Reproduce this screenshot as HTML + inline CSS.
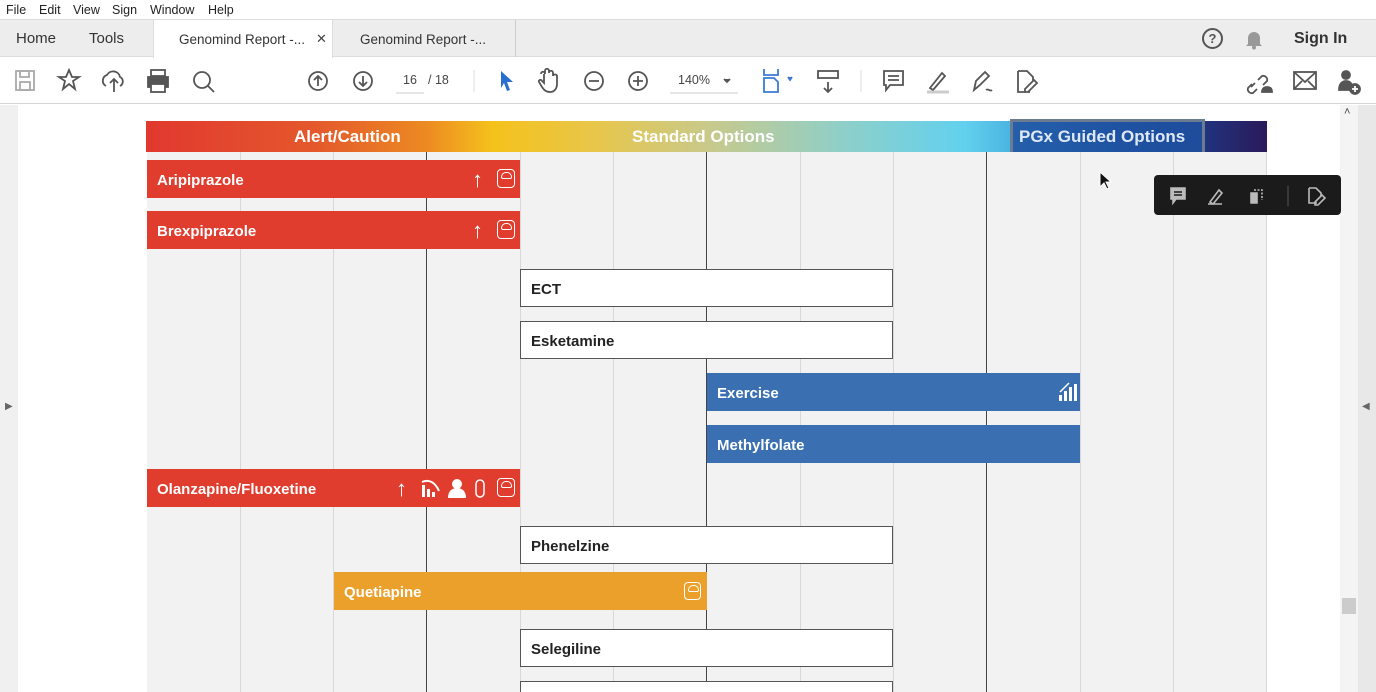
<!DOCTYPE html>
<html><head><meta charset="utf-8"><style>
*{margin:0;padding:0;box-sizing:border-box}
html,body{width:1376px;height:692px;overflow:hidden}
body{background:#fff;font-family:"Liberation Sans",sans-serif;position:relative}
.a{position:absolute}
.menu{top:0;left:0;width:1376px;height:20px;background:#fff;font-size:12.5px;color:#222;border-bottom:1px solid #ddd}
.menu span{position:absolute;top:3px}
.tabs{top:20px;left:0;width:1376px;height:37px;background:#ededed;border-bottom:1px solid #ddd}
.tb{top:58px;left:0;width:1376px;height:46px;background:#fff;border-bottom:1px solid #d6d6d6}
.grid{top:152px;left:147px;width:1120px;height:540px;background:#f2f2f2;overflow:hidden}
.vl{position:absolute;top:0;width:1px;height:540px;background:#d8d8d8}
.vl.d{background:#444}
.bar{position:absolute;height:38px;color:#fff;font-weight:bold;font-size:15px;line-height:41px;padding-left:10px}
.r{background:#e03d2f}
.w{background:#fff;border:1px solid #555;color:#222;line-height:39px}
.b{background:#3a6fb2}
.o{background:#eaa02a}
.bi{position:absolute;top:9px;width:18px;height:19px;border:1.5px solid #fff;border-radius:4px}
.bi::after{content:"";position:absolute;left:3px;top:2px;width:9px;height:5px;border:1.3px solid #fff;border-radius:5px 5px 2px 2px}
</style></head><body>
<div class="a menu"><span style="left:6px">File</span><span style="left:39px">Edit</span><span style="left:73px">View</span><span style="left:112px">Sign</span><span style="left:150px">Window</span><span style="left:208px">Help</span></div>
<div class="a tabs">
<span class="a" style="left:16px;top:10px;font-size:15px;color:#333">Home</span>
<span class="a" style="left:89px;top:10px;font-size:15px;color:#333">Tools</span>
<div class="a" style="left:153px;top:0;width:180px;height:38px;background:#fff;border-left:1px solid #ddd;border-right:1px solid #ddd"><span class="a" style="left:25px;top:12px;font-size:13.5px;color:#333">Genomind Report -...</span><span class="a" style="left:162px;top:11px;font-size:13px;color:#444">✕</span></div>
<span class="a" style="left:360px;top:12px;font-size:13.5px;color:#333">Genomind Report -...</span>
<div class="a" style="left:515px;top:0;width:1px;height:37px;background:#ccc"></div>
<div class="a" style="left:1202px;top:8px;width:21px;height:21px;border:2px solid #555;border-radius:50%;font-size:13px;text-align:center;line-height:17px;color:#555;font-weight:bold">?</div>
<svg class="a" style="left:1244px;top:8px" width="20" height="22"><path d="M4 16V10a6 6 0 0 1 12 0v6l2 2H2z" fill="#999"/><circle cx="10" cy="19.5" r="2" fill="#999"/></svg>
<span class="a" style="left:1294px;top:10px;font-size:16px;color:#333;font-weight:bold">Sign In</span>
</div>
<div class="a tb">
<svg class="a" style="left:0;top:0" width="1376" height="46" fill="none" stroke="#555" stroke-width="1.8">
<rect x="16" y="13" width="18" height="19" stroke="#aaa"/><rect x="20" y="13" width="9" height="6" stroke="#aaa"/><rect x="20" y="24" width="10" height="8" stroke="#aaa"/>
<path d="M69 12l3 7h7l-6 4 2 8-6-5-6 5 2-8-6-4h7z"/>
<path d="M106 28a6 6 0 0 1 1-11 7 7 0 0 1 13 2 5 5 0 0 1 0 9M114 34V21m-4 4 4-4 4 4"/>
<rect x="148" y="19" width="20" height="10" fill="#555"/><rect x="151" y="12" width="14" height="6"/><rect x="151" y="26" width="14" height="8" fill="#fff"/>
<circle cx="202" cy="22" r="8"/><path d="M208 28l6 6"/>
<circle cx="318" cy="23" r="9"/><path d="M318 28V18m-4 4 4-4 4 4"/>
<circle cx="363" cy="23" r="9"/><path d="M363 18v10m-4-4 4 4 4-4"/>
<path d="M396 35h28" stroke="#ccc" stroke-width="1"/>
<path d="M474 12v22" stroke="#ddd" stroke-width="1"/>
<path d="M541 16c0-3 4-3 4 0v-3c0-3 4-3 4 0v2c0-3 4-3 4 0v3c0-2 4-2 4 0v8c0 5-3 8-7 8s-6-2-8-5l-3-5c-1-2 2-3 3-1l2 2V16"/>
<circle cx="594" cy="23" r="9"/><path d="M589 23h10"/>
<circle cx="638" cy="23" r="9"/><path d="M633 23h10M638 18v10"/>
<path d="M670 35h68" stroke="#ccc" stroke-width="1"/>
<path d="M724 21l3 3 3-3" fill="#555"/>
<path d="M764 11v6h14v-6M764 20h10l4 4v10h-14z" stroke="#3a7bd5"/><path d="M788 19l2 3 2-3" fill="#3a7bd5" stroke="#3a7bd5"/>
<rect x="818" y="13" width="20" height="7"/><path d="M828 24v10m-4-4 4 4 4-4"/>
<path d="M861 12v22" stroke="#ddd" stroke-width="1"/>
<path d="M884 13h19v14h-13l-4 5v-5h-2z"/><path d="M888 18h11M888 22h11"/>
<path d="M930 30l12-15 3 3-12 14z"/><path d="M927 34h22" stroke="#ccc" stroke-width="3"/>
<path d="M974 32l2-9 9-9 4 4-9 9zM986 32c2-2 4 2 6 0"/>
<path d="M1018 13h9l6 6v4M1018 13v21h12M1025 31l9-9 3 3-9 9h-3z"/>
<path d="M1251 29l4-4m3-3 4-4a4 4 0 0 1 5 5l-4 4M1257 31l-4 4a4 4 0 0 1-5-5l4-4"/><path d="M1262 34h10c0-4-2-5-5-5s-5 2-5 5z" fill="#555"/>
<rect x="1294" y="14" width="22" height="17"/><path d="M1294 14l11 10 11-10M1294 31l8-8m14 8-8-8"/>
<circle cx="1346" cy="17" r="4" fill="#555"/><path d="M1339 32c0-6 3-9 7-9s5 2 6 4v5z" fill="#555"/><circle cx="1355" cy="31" r="5" fill="#555"/><path d="M1355 28v6m-3-3h6" stroke="#fff"/>
</svg>
<svg class="a" style="left:499px;top:12px" width="16" height="22"><path d="M2 1l12 11h-6l3 8-3 1-3-8-3 5z" fill="#2a6fd0"/></svg>
<span class="a" style="left:403px;top:15px;font-size:12.5px;color:#444">16</span>
<span class="a" style="left:428px;top:15px;font-size:12.5px;color:#444">/ 18</span>
<span class="a" style="left:678px;top:15px;font-size:12.5px;color:#444">140%</span>
</div>
<div class="a" style="left:0;top:105px;width:18px;height:587px;background:#f0f0f0"></div>
<span class="a" style="left:5px;top:401px;font-size:10px;color:#666">▶</span>
<div class="a" style="left:1340px;top:105px;width:18px;height:587px;background:#f4f4f4"></div>
<span class="a" style="left:1344px;top:106px;font-size:11px;color:#444">˄</span>
<div class="a" style="left:1342px;top:598px;width:14px;height:16px;background:#ccc"></div>
<div class="a" style="left:1358px;top:105px;width:18px;height:587px;background:#e8e8e8"></div>
<span class="a" style="left:1362px;top:401px;font-size:10px;color:#666">◀</span>
<div class="a" style="left:146px;top:121px;width:1121px;height:31px;background:linear-gradient(90deg,#e2382f 0%,#e4582c 15%,#ec8a22 25%,#f5c21c 31%,#e8c64a 40%,#c9c98a 50%,#8fcfc8 62%,#62d1ee 73%,#3aa0d8 80%,#1e5ba8 88%,#22307a 95%,#2a1a5a 100%)"></div>
<span class="a" style="left:294px;top:127px;font-size:17px;color:#fff;font-weight:bold">Alert/Caution</span>
<span class="a" style="left:632px;top:127px;font-size:17px;color:#fff;font-weight:bold">Standard Options</span>
<div class="a" style="left:1010px;top:119px;width:195px;height:37px;border:3px solid #6b7b92;background:rgba(30,80,160,.85)"></div>
<span class="a" style="left:1019px;top:127px;font-size:17px;color:#dfe8f5;font-weight:bold">PGx Guided Options</span>
<div class="a grid">
<div class="vl" style="left:93px"></div><div class="vl" style="left:186px"></div><div class="vl d" style="left:279px"></div><div class="vl" style="left:373px"></div><div class="vl" style="left:466px"></div><div class="vl d" style="left:559px"></div><div class="vl" style="left:653px"></div><div class="vl" style="left:746px"></div><div class="vl d" style="left:839px"></div><div class="vl" style="left:933px"></div><div class="vl" style="left:1026px"></div><div class="vl" style="left:1119px"></div>
<div class="bar r" style="left:0;top:8px;width:373px">Aripiprazole<span class="a" style="left:325px;top:-1px;font-size:22px;font-weight:normal">↑</span><span class="bi" style="left:350px"></span></div>
<div class="bar r" style="left:0;top:59px;width:373px">Brexpiprazole<span class="a" style="left:325px;top:-1px;font-size:22px;font-weight:normal">↑</span><span class="bi" style="left:350px"></span></div>
<div class="bar w" style="left:373px;top:117px;width:373px">ECT</div>
<div class="bar w" style="left:373px;top:169px;width:373px">Esketamine</div>
<div class="bar b" style="left:560px;top:221px;width:373px">Exercise<svg class="a" style="left:350px;top:8px" width="20" height="22" fill="#fff"><rect x="2" y="14" width="3" height="6"/><rect x="7" y="10" width="3" height="10"/><rect x="12" y="6" width="3" height="14"/><rect x="17" y="3" width="3" height="17"/><path d="M3 11l9-9" stroke="#fff" stroke-width="1.5"/></svg></div>
<div class="bar b" style="left:560px;top:273px;width:373px">Methylfolate</div>
<div class="bar r" style="left:0;top:317px;width:373px">Olanzapine/Fluoxetine<span class="a" style="left:249px;top:-1px;font-size:22px;font-weight:normal">↑</span>
<svg class="a" style="left:274px;top:8px" width="70" height="22" fill="#fff"><rect x="1" y="8" width="3" height="12"/><rect x="6" y="12" width="3" height="8"/><rect x="11" y="15" width="3" height="5"/><path d="M1 5c7-3 13 0 17 9" stroke="#fff" stroke-width="2" fill="none"/><circle cx="36" cy="7" r="5"/><path d="M27 21c0-7 4-10 9-10s9 3 9 10z"/><rect x="55" y="3" width="8" height="17" rx="4" fill="none" stroke="#fff" stroke-width="1.5"/></svg>
<span class="bi" style="left:350px"></span></div>
<div class="bar w" style="left:373px;top:374px;width:373px">Phenelzine</div>
<div class="bar o" style="left:187px;top:420px;width:373px">Quetiapine<span class="bi" style="left:350px;top:10px;width:17px;height:18px"></span></div>
<div class="bar w" style="left:373px;top:477px;width:373px">Selegiline</div>
<div class="bar w" style="left:373px;top:529px;width:373px"></div>
</div>
<div class="a" style="left:1154px;top:175px;width:187px;height:40px;background:#1b1b1b;border-radius:4px">
<svg width="187" height="40" fill="none" stroke="#bbb" stroke-width="1.6"><path d="M17 13h14v11h-9l-3 4v-4h-2z" fill="#bbb"/><path d="M20 17h8M20 20h8" stroke="#1b1b1b"/><path d="M56 27l9-12 3 3-9 11zM54 29h14"/><path d="M97 18h6v10h-6z" fill="#bbb"/><path d="M100 15h8v10" stroke-dasharray="2 1.5"/><path d="M134 11v20" stroke="#555" stroke-width="1"/><path d="M155 13h7l5 5v3M155 13v15h8M161 27l7-7 3 3-7 7h-3z"/></svg>
</div>
<svg class="a" style="left:1099px;top:171px" width="14" height="20"><path d="M1 1v15l4-4 3 6 2-1-3-6h5z" fill="#111" stroke="#fff" stroke-width="1"/></svg>
</body></html>
